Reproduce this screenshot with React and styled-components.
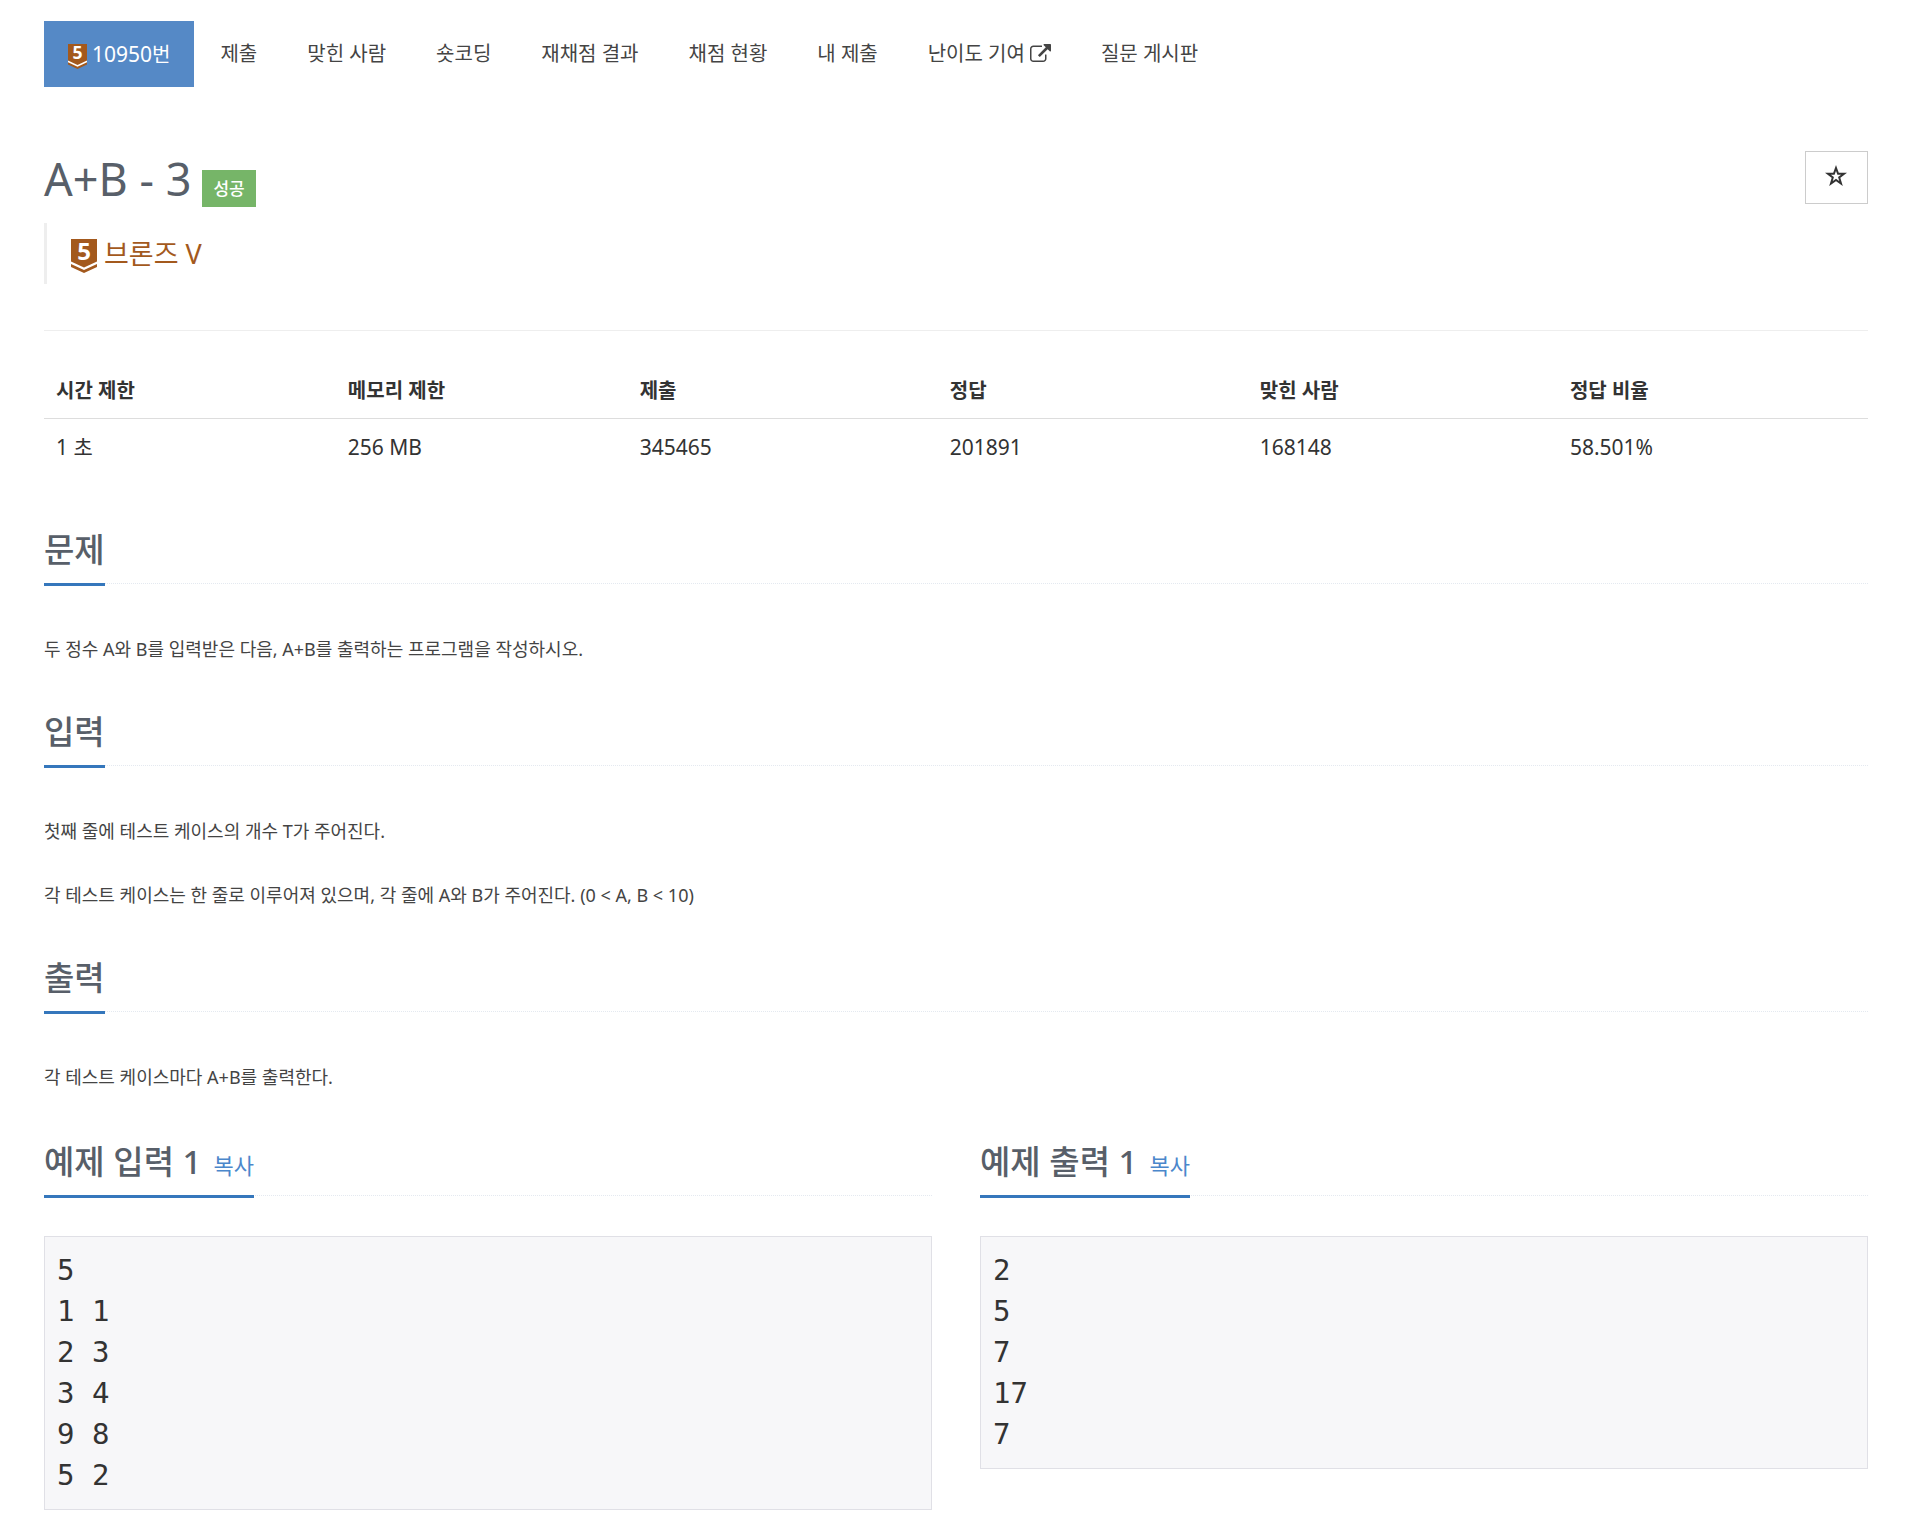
import React from 'react';
import styled, { createGlobalStyle } from 'styled-components';

const GlobalStyle = createGlobalStyle`
  * {
    box-sizing: border-box;
  }
  body {
    margin: 0;
    background: #fff;
    color: #333;
    font-family: "Noto Sans", "Noto Sans CJK KR", sans-serif;
    font-size: 20px;
    line-height: 30px;
  }
`;

const Page = styled.div`
  padding: 21px 60px 28px 44px;
`;

const Menu = styled.nav`
  display: flex;
  gap: 2px;
`;

const MenuItem = styled.a`
  display: flex;
  align-items: center;
  gap: 5px;
  height: 66px;
  padding: 0 24px;
  text-decoration: none;
  color: ${props => props.$active ? '#fff' : '#444'};
  background-color: ${props => props.$active ? '#5589c6' : 'transparent'};
`;

const ProblemNumber = styled.span`
  font-size: 21px;
`;

const Header = styled.header`
  display: flex;
  justify-content: space-between;
  align-items: flex-start;
  margin-top: 64px;
  padding-bottom: 46px;
  border-bottom: 1px solid #eee;
`;

const TitleRow = styled.div`
  display: flex;
  align-items: flex-end;
  gap: 11px;
  height: 56px;
`;

const Title = styled.h1`
  margin: 0;
  font-size: 45px;
  line-height: 56px;
  font-weight: 400;
  color: #585f69;
`;

const Badge = styled.span`
  padding: 0 11px;
  font-size: 17px;
  line-height: 37px;
  font-weight: 500;
  color: #fff;
  background-color: #76b568;
`;

const Tier = styled.blockquote`
  display: flex;
  align-items: center;
  gap: 7px;
  height: 61px;
  margin: 16px 0 0;
  padding-left: 24px;
  border-left: 3px solid #eee;
  font-size: 27px;
  color: #a3591d;
`;

const StarButton = styled.button`
  display: flex;
  align-items: center;
  justify-content: center;
  width: 63px;
  height: 53px;
  padding: 0 2px 4px 0;
  border: 1px solid #ccc;
  background: #fff;
  color: #333;
  cursor: pointer;
`;

const Info = styled.table`
  width: 100%;
  margin: 31px 0 45px;
  table-layout: fixed;
  border-collapse: collapse;
  text-align: left;
  th, td {
    height: 56px;
    padding: 2px 12px 0;
  }
  th {
    font-weight: 700;
    border-bottom: 1px solid #ddd;
  }
  td {
    font-size: 21px;
  }
`;

const Col = styled.col`
  width: ${props => props.$wide ? '17%' : '16%'};
`;

const Section = styled.section`
  margin-top: 37px;
`;

const Headline = styled.div`
  display: flex;
  height: 65px;
  margin-bottom: 40px;
  border-bottom: 1px dotted #e4e9f0;
`;

const HeadlineTitle = styled.h2`
  display: flex;
  align-items: baseline;
  gap: 12px;
  height: 67px;
  margin: 0;
  font-size: 33px;
  line-height: 62px;
  font-weight: 500;
  color: #585f69;
  border-bottom: 3px solid #3577bc;
`;

const CopyButton = styled.button`
  padding: 0;
  border: none;
  background: none;
  font-family: inherit;
  font-size: 22px;
  color: #4b87cb;
  cursor: pointer;
`;

const Description = styled.div`
  display: grid;
  gap: 34px;
  padding-top: 10px;
`;

const Paragraph = styled.p`
  margin: 0;
  font-size: 18px;
  line-height: 30px;
  color: #444;
`;

const Samples = styled.div`
  display: grid;
  grid-template-columns: 1fr 1fr;
  align-items: start;
  gap: 48px;
  padding-top: 2px;
`;

const SampleData = styled.pre`
  margin: 0;
  padding: 13px 12px;
  border: 1px solid #e0e0e6;
  background-color: #f7f7f9;
  font-family: "DejaVu Sans Mono", monospace;
  font-size: 29px;
  line-height: 41px;
`;

const TierSvg = styled.svg`
  flex: none;
  margin-top: 4px;
  overflow: visible;
`;

const TierNumber = styled.text`
  font-size: 24px;
  font-weight: 700;
  fill: #fff;
`;

const TierIcon = ({ width, height }) => (
  <TierSvg width={width} height={height} viewBox="0 0 26 34" aria-hidden="true">
    <path d="M0 22h26v4l-13 6-13-6z" fill="#fff" />
    <path d="M0 0h26v22.500L13 28.500 0 22.500z" fill="#a3591d" />
    <path d="M0 25l13 6 13-6v3l-13 6-13-6z" fill="#a3591d" />
    <TierNumber x="13" y="21" textAnchor="middle">5</TierNumber>
  </TierSvg>
);

const ExternalIcon = () => (
  <svg width="21" height="21" viewBox="0 0 1792 1792" fill="currentColor" aria-hidden="true">
    <path d="M1408 928v320q0 119-84.5 203.5t-203.5 84.5h-832q-119 0-203.5-84.5t-84.5-203.5v-832q0-119 84.500-203.500t203.500-84.500h704q14 0 23 9t9 23v64q0 14-9 23t-23 9h-704q-66 0-113 47t-47 113v832q0 66 47 113t113 47h832q66 0 113-47t47-113v-320q0-14 9-23t23-9h64q14 0 23 9t9 23zm384-864v512q0 26-19 45t-45 19-45-19l-176-176-652 652q-10 10-23 10t-23-10l-114-114q-10-10-10-23t10-23l652-652-176-176q-19-19-19-45t19-45 45-19h512q26 0 45 19t19 45z" />
  </svg>
);

const StarIcon = () => (
  <svg width="22" height="21" viewBox="0 0 22 21" aria-hidden="true">
    <path d="M11 3l2.100 5.800h6l-4.900 3.700 1.800 6-5-3.600-5 3.600 1.800-6-4.900-3.700h6z" fill="none" stroke="currentColor" strokeWidth="2" />
  </svg>
);

const info = [
  ['시간 제한', '1 초'],
  ['메모리 제한', '256 MB'],
  ['제출', '345465'],
  ['정답', '201891'],
  ['맞힌 사람', '168148'],
  ['정답 비율', '58.501%'],
];

const sections = [
  { title: '문제', text: ['두 정수 A와 B를 입력받은 다음, A+B를 출력하는 프로그램을 작성하시오.'] },
  {
    title: '입력',
    text: [
      '첫째 줄에 테스트 케이스의 개수 T가 주어진다.',
      '각 테스트 케이스는 한 줄로 이루어져 있으며, 각 줄에 A와 B가 주어진다. (0 < A, B < 10)',
    ],
  },
  { title: '출력', text: ['각 테스트 케이스마다 A+B를 출력한다.'] },
];

const samples = [
  { title: '예제 입력 1', data: '5\n1 1\n2 3\n3 4\n9 8\n5 2' },
  { title: '예제 출력 1', data: '2\n5\n7\n17\n7' },
];

const App = () => (
  <>
    <GlobalStyle />
    <Page>
      <Menu>
        <MenuItem href="#problem" $active>
          <TierIcon width="19" height="25" />
          <span><ProblemNumber>10950</ProblemNumber>번</span>
        </MenuItem>
        <MenuItem href="#submit">제출</MenuItem>
        <MenuItem href="#solvers">맞힌 사람</MenuItem>
        <MenuItem href="#short">숏코딩</MenuItem>
        <MenuItem href="#rejudge">재채점 결과</MenuItem>
        <MenuItem href="#status">채점 현황</MenuItem>
        <MenuItem href="#mine">내 제출</MenuItem>
        <MenuItem href="#contribute">난이도 기여 <ExternalIcon /></MenuItem>
        <MenuItem href="#board">질문 게시판</MenuItem>
      </Menu>
      <Header>
        <div>
          <TitleRow>
            <Title>A+B - 3</Title>
            <Badge>성공</Badge>
          </TitleRow>
          <Tier><TierIcon width="26" height="34" />브론즈 V</Tier>
        </div>
        <StarButton aria-label="즐겨찾기"><StarIcon /></StarButton>
      </Header>
      <Info>
        <colgroup>
          {info.map(([name], i) => <Col key={name} $wide={i > 1} />)}
        </colgroup>
        <thead>
          <tr>{info.map(([name]) => <th key={name} scope="col">{name}</th>)}</tr>
        </thead>
        <tbody>
          <tr>{info.map(([name, value]) => <td key={name}>{value}</td>)}</tr>
        </tbody>
      </Info>
      {sections.map(section => (
        <Section key={section.title}>
          <Headline><HeadlineTitle>{section.title}</HeadlineTitle></Headline>
          <Description>
            {section.text.map(line => <Paragraph key={line}>{line}</Paragraph>)}
          </Description>
        </Section>
      ))}
      <Samples>
        {samples.map(sample => (
          <Section key={sample.title}>
            <Headline>
              <HeadlineTitle>{sample.title}<CopyButton>복사</CopyButton></HeadlineTitle>
            </Headline>
            <SampleData>{sample.data}</SampleData>
          </Section>
        ))}
      </Samples>
    </Page>
  </>
);

export default App;
